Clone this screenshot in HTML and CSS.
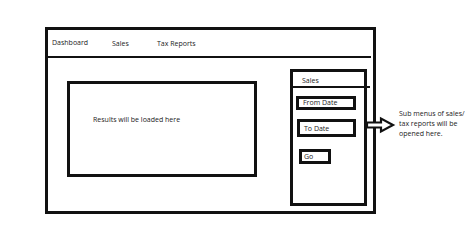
FILE: index.html
```html
<!DOCTYPE html>
<html lang="en">
<head>
    <meta charset="UTF-8">
    <meta name="viewport" content="width=device-width, initial-scale=1.0">
    <title>Reports wireframe</title>
    <link rel="stylesheet" href="styles.css">
</head>
<body>
    <div class="page">
        <div class="window">
            <!-- top menu -->
            <div class="nav">
                <span class="nav-item nav-dashboard">Dashboard</span>
                <span class="nav-item nav-sales">Sales</span>
                <span class="nav-item nav-tax">Tax Reports</span>
            </div>
            <div class="content">
                <div class="results">
                    <span>Results will be loaded here</span>
                </div>
                <!-- sub menu -->
                <div class="side">
                    <div class="side-title">Sales</div>
                    <div class="field field-from">From Date</div>
                    <div class="field field-to">To Date</div>
                    <div class="field field-go">Go</div>
                </div>
            </div>
        </div>
        <p class="note">Sub menus of sales/<br>tax reports will be<br>opened here.</p>

        <svg class="pointer" width="30" height="18" viewBox="0 0 30 18">
            <path d="M1 6.5 H15 V2.5 L27 9 L15 15.5 V11.5 H1 Z" fill="#fff" stroke="#111" stroke-width="2.2" stroke-linejoin="miter"/>
        </svg>
    </div>
</body>
</html>
```

FILE: styles.css
```css
body {
    margin: 0;
    background: #fff;
    font-family: "Open Sans", Lato, sans-serif;
    color: #222;
}
.page {
    position: relative;
    display: flex;
    align-items: flex-start;
    padding: 27px 0 0 45px;
}
.window {
    width: 325px;
    height: 181px;
    border: 3px solid #111;
}
.nav {
    display: flex;
    align-items: center;
    height: 26px;
    margin-left: -2px;
    margin-right: 2px;
    padding-left: 6px;
    border-bottom: 2px solid #111;
    font-size: 7px;
}
.nav-dashboard {
    width: 60px;
    margin-top: -2px;
}
.nav-sales {
    width: 45px;
}
.nav-tax {
    margin-top: 1px;
}
.content {
    display: flex;
    align-items: flex-start;
}
.results {
    width: 184px;
    height: 90px;
    margin: 23px 0 0 19px;
    border: 3px solid #111;
    font-size: 7px;
}
.results span {
    display: block;
    margin: 31px 0 0 23px;
}
.side {
    width: 71px;
    height: 131px;
    margin: 11px 0 0 33px;
    border: 3px solid #111;
    font-size: 7px;
}
.side-title {
    height: 14px;
    margin-right: -6px;
    padding-left: 9px;
    line-height: 17px;
    border-bottom: 2px solid #111;
}
.field {
    border: 3px solid #111;
    padding-left: 4px;
    line-height: 8px;
}
.field-from {
    width: 50px;
    height: 8px;
    margin: 8px 0 0 3px;
}
.field-to {
    width: 49px;
    height: 12px;
    margin: 9px 0 0 4px;
    line-height: 13px;
}
.field-go {
    width: 24px;
    height: 9px;
    margin: 12px 0 0 6px;
    padding-left: 2px;
    line-height: 10px;
}
.note {
    margin: 82px 0 0 23px;
    font-size: 7px;
    line-height: 10px;
}
.pointer {
    position: absolute;
    left: 366px;
    top: 116px;
}
```
